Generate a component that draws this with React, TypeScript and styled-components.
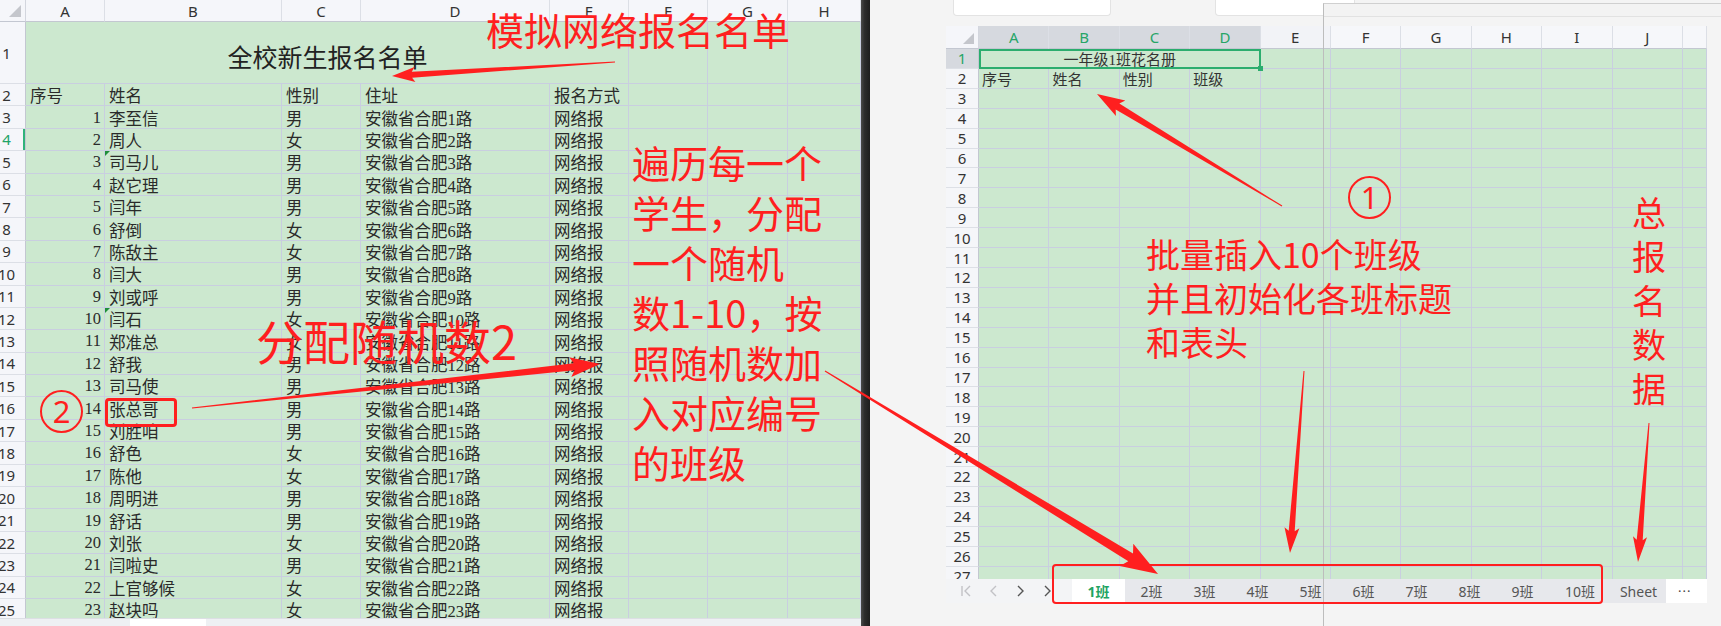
import React from 'react';
import styled, { createGlobalStyle } from 'styled-components';

const GlobalStyle = createGlobalStyle`
  html, body { margin: 0; padding: 0; }
  body {
    width: 1721px; height: 626px; overflow: hidden;
    background: #f4f4f4;
    font-family: "Noto Sans CJK SC", sans-serif;
  }
`;

const RED = '#ff1f1f';
const GRID = '#c9cee0';
const CELL_BG = '#cce8cf';

const Page = styled.div`
  position: relative;
  width: 1721px;
  height: 626px;
  display: flex;
  overflow: hidden;
`;

/* ---------------- left sheet ---------------- */
const LeftPanel = styled.div`
  width: 861px;
  flex: none;
  display: flex;
  flex-direction: column;
  background: ${CELL_BG};
`;

const LeftGrid = styled.div`
  height: 618px;
  overflow: hidden;
  display: grid;
  grid-template-columns: 26px 79px 177px 79px 189px 79px 79px 80px 73px;
  grid-template-rows: 22px 62px repeat(24, 22.4px);
`;

const Corner = styled.div<{ $w: number }>`
  position: relative;
  box-sizing: border-box;
  background: #f5f6fa;
  border-right: 1px solid #d3d6de;
  border-bottom: 1px solid #c3c7d1;
  &::after {
    content: '';
    position: absolute;
    right: 4px;
    bottom: 4px;
    width: 0;
    height: 0;
    border-left: ${p => p.$w}px solid transparent;
    border-bottom: ${p => p.$w}px solid #c4c6cc;
  }
`;

const ColHead = styled.div<{ $hl?: boolean; $light?: boolean }>`
  box-sizing: border-box;
  display: flex;
  align-items: center;
  justify-content: center;
  background: ${p => (p.$hl ? '#d6d9df' : p.$light ? '#f6f7fa' : '#f2f3f7')};
  color: ${p => (p.$hl ? '#27a567' : '#333')};
  border-right: 1px solid #dcdfe6;
  border-bottom: 1px solid #c3c7d1;
  font-family: "Noto Sans", sans-serif;
  font-size: 15px;
`;

const LeftColHead = styled(ColHead)`
  background: #f5f6fa;
`;

const LeftRowHead = styled.div<{ $active?: boolean }>`
  box-sizing: border-box;
  display: flex;
  align-items: center;
  justify-content: center;
  padding-right: 12px;
  background: #f5f6fa;
  color: ${p => (p.$active ? '#21a366' : '#333')};
  box-shadow: ${p => (p.$active ? 'inset -2px 0 0 #2fb37a' : 'none')};
  border-right: 1px solid #c3c7d1;
  border-bottom: 1px solid #dcdfe6;
  font-family: "Noto Sans", sans-serif;
  font-size: 15px;
  overflow: visible;
`;

const Cell = styled.div<{ $right?: boolean; $flag?: boolean }>`
  position: relative;
  box-sizing: border-box;
  display: flex;
  align-items: center;
  justify-content: ${p => (p.$right ? 'flex-end' : 'flex-start')};
  padding: 1px 3px 0 4px;
  border-right: 1px solid ${GRID};
  border-bottom: 1px solid ${GRID};
  font-family: "Liberation Serif", "Noto Sans CJK SC", serif;
  font-size: 16.5px;
  color: #2a2a2a;
  white-space: nowrap;
  overflow: hidden;
  &::before {
    content: '';
    display: ${p => (p.$flag ? 'block' : 'none')};
    position: absolute;
    left: 0;
    top: 0;
    border-top: 5px solid #1f8f3a;
    border-right: 5px solid transparent;
  }
`;

const TitleCell = styled(Cell)`
  grid-column: span 5;
  justify-content: center;
  padding-top: 7px;
  font-size: 25px;
  font-family: "Noto Sans CJK SC", serif;
  color: #222;
`;

const LeftTabs = styled.div`
  height: 8px;
  display: flex;
  padding-left: 130px;
  background: #eef0f3;
  border-top: 1px solid #dcdfe4;
  box-sizing: border-box;
`;

const LeftTab = styled.div`
  width: 76px;
  background: #fff;
`;

/* ---------------- divider ---------------- */
const Divider = styled.div`
  width: 9px;
  flex: none;
  background: linear-gradient(to right, #4a4a4a, #2c2c2c 40%, #1e1e1e);
`;

/* ---------------- right sheet ---------------- */
const RightPanel = styled.div`
  flex: 1;
  display: flex;
  flex-direction: column;
  background: #f4f4f4;
`;

const TopStrip = styled.div`
  height: 26px;
  display: flex;
  align-items: flex-start;
  gap: 104px;
  padding-left: 83px;
`;

const InputBox = styled.div<{ $w: number }>`
  width: ${p => p.$w}px;
  height: 16px;
  box-sizing: border-box;
  background: #fff;
  border: 1px solid #e3e3e3;
  border-top: none;
  border-radius: 0 0 4px 4px;
`;

const SheetWrap = styled.div`
  margin-left: 76px;
  width: 761px;
  display: flex;
  flex-direction: column;
`;

const RGrid = styled.div`
  height: 553px;
  overflow: hidden;
  display: grid;
  grid-template-columns: 33px repeat(10, 70.4px) 24px;
  grid-template-rows: 23px repeat(27, 19.92px);
  background: ${CELL_BG};
`;

const RRowHead = styled.div<{ $active?: boolean }>`
  box-sizing: border-box;
  display: flex;
  align-items: center;
  justify-content: center;
  background: ${p => (p.$active ? '#d6d9df' : '#f5f6f9')};
  color: ${p => (p.$active ? '#27a567' : '#333')};
  border-right: 1px solid #c3c7d1;
  border-bottom: 1px solid #dde0e6;
  font-family: "Noto Sans", sans-serif;
  font-size: 15px;
`;

const RCell = styled.div`
  box-sizing: border-box;
  display: flex;
  align-items: center;
  padding: 0 3px;
  border-right: 1px solid ${GRID};
  border-bottom: 1px solid ${GRID};
  font-family: "Noto Sans CJK SC", sans-serif;
  font-size: 15px;
  color: #333;
  white-space: nowrap;
  overflow: hidden;
`;

const MergedTitle = styled.div`
  position: relative;
  grid-column: span 4;
  display: flex;
  align-items: center;
  justify-content: center;
  box-shadow: inset 0 0 0 2px #2bad6e;
  font-family: "Liberation Serif", "Noto Sans CJK SC", serif;
  font-size: 15px;
  color: #333;
  &::after {
    content: '';
    position: absolute;
    right: -2px;
    bottom: -2px;
    width: 5px;
    height: 5px;
    background: #2bad6e;
  }
`;

const TabBar = styled.div`
  height: 24px;
  display: flex;
  background: #e7e8ec;
`;

const NavArea = styled.div`
  width: 126px;
  display: flex;
  align-items: center;
  gap: 15px;
  padding-left: 14px;
  box-sizing: border-box;
  background: #f3f4f6;
`;

const NavIcon = styled.svg<{ $dim?: boolean }>`
  width: 12px;
  height: 14px;
  stroke: ${p => (p.$dim ? '#c2c2c6' : '#555')};
  fill: none;
  stroke-width: 1.4;
`;

const Tab = styled.div<{ $active?: boolean; $w: number }>`
  width: ${p => p.$w}px;
  flex: none;
  display: flex;
  align-items: center;
  justify-content: center;
  background: ${p => (p.$active ? '#fff' : '#e7e8ec')};
  color: ${p => (p.$active ? '#1fa463' : '#555')};
  font-weight: ${p => (p.$active ? 700 : 400)};
  font-family: "Noto Sans", "Noto Sans CJK SC", sans-serif;
  font-size: 14px;
`;

const MoreArea = styled.div`
  flex: 1;
  display: flex;
  align-items: center;
  padding-left: 12px;
  background: #fff;
  color: #444;
  font-size: 13px;
  letter-spacing: 1px;
  font-family: "Noto Sans", sans-serif;
`;

/* ---------------- overlays ---------------- */
const WindowEdge = styled.div`
  position: absolute;
  left: 1323px;
  top: 3px;
  right: 0;
  bottom: 0;
  border-left: 1px solid #bdbdbd;
  border-top: 1px solid #d0d0d0;
  pointer-events: none;
`;

const WindowTop = styled.div`
  height: 12px;
  background: #f3f3f3;
  border-bottom: 1px solid #e2e2e2;
`;

const Note = styled.div`
  position: absolute;
  color: ${RED};
  font-family: "Noto Sans CJK SC", sans-serif;
  white-space: nowrap;
  pointer-events: none;
`;

const TitleNote = styled(Note)`
  left: 486px;
  top: 10px;
  font-size: 38px;
  line-height: 38px;
`;

const StepNote = styled(Note)`
  left: 632px;
  top: 137px;
  font-size: 38px;
  line-height: 50px;
`;

const RandomNote = styled(Note)`
  left: 256px;
  top: 316px;
  font-size: 47px;
  line-height: 47px;
`;

const ClassNote = styled(Note)`
  left: 1146px;
  top: 232px;
  font-size: 34px;
  line-height: 44px;
`;

const SheetNote = styled(Note)`
  left: 1632px;
  top: 190px;
  font-size: 34px;
  line-height: 44px;
  display: flex;
  flex-direction: column;
`;

const Circled = styled.div<{ $x: number; $y: number }>`
  position: absolute;
  left: ${p => p.$x}px;
  top: ${p => p.$y}px;
  width: 43px;
  height: 43px;
  box-sizing: border-box;
  border: 2px solid ${RED};
  border-radius: 50%;
  display: flex;
  align-items: center;
  justify-content: center;
  color: ${RED};
  font-family: "Noto Sans", sans-serif;
  font-size: 31px;
  line-height: 1;
  padding-bottom: 1px;
`;

const RedBox = styled.div<{ $x: number; $y: number; $w: number; $h: number; $b: number }>`
  position: absolute;
  left: ${p => p.$x}px;
  top: ${p => p.$y}px;
  width: ${p => p.$w}px;
  height: ${p => p.$h}px;
  box-sizing: border-box;
  border: ${p => p.$b}px solid ${RED};
  border-radius: 4px;
  pointer-events: none;
`;

const ArrowLayer = styled.svg`
  position: absolute;
  left: 0;
  top: 0;
  width: 1721px;
  height: 626px;
  pointer-events: none;
`;

/* ---------------- data ---------------- */
const students: [string, string][] = [
  ['李至信', '男'], ['周人', '女'], ['司马儿', '男'], ['赵它理', '男'], ['闫年', '男'],
  ['舒倒', '女'], ['陈敌主', '女'], ['闫大', '男'], ['刘或呼', '男'], ['闫石', '女'],
  ['郑准总', '女'], ['舒我', '男'], ['司马使', '男'], ['张总哥', '男'], ['刘胜咱', '男'],
  ['舒色', '女'], ['陈他', '女'], ['周明进', '男'], ['舒话', '男'], ['刘张', '女'],
  ['闫啦史', '男'], ['上官够候', '女'], ['赵块吗', '女'],
];

const leftCols = ['A', 'B', 'C', 'D', 'E', 'F', 'G', 'H'];
const rightCols = ['A', 'B', 'C', 'D', 'E', 'F', 'G', 'H', 'I', 'J', ''];

type ArrowSpec = [number, number, number, number, number, number, number, number];

const arrows: ArrowSpec[] = [
  [615, 62, 392, 76, 1, 6, 20, 15],
  [192, 408, 600, 364, 1, 7, 26, 20],
  [825, 371, 1158, 574, 1.2, 9, 32, 26],
  [1282, 206, 1097, 94, 1, 7, 24, 18],
  [1304, 371, 1290, 553, 1, 6, 22, 15],
  [1649, 423, 1638, 562, 1, 6, 22, 14],
];

function arrowPoints([x1, y1, x2, y2, w1, w2, hl, hw]: ArrowSpec): string {
  const dx = x2 - x1;
  const dy = y2 - y1;
  const L = Math.hypot(dx, dy);
  const ux = dx / L;
  const uy = dy / L;
  const nx = -uy;
  const ny = ux;
  const bx = x2 - ux * hl;
  const by = y2 - uy * hl;
  const back = hl * 0.15;
  const cx = bx - ux * back;
  const cy = by - uy * back;
  const pts = [
    [x1 + (nx * w1) / 2, y1 + (ny * w1) / 2],
    [bx + (nx * w2) / 2, by + (ny * w2) / 2],
    [cx + (nx * hw) / 2, cy + (ny * hw) / 2],
    [x2, y2],
    [cx - (nx * hw) / 2, cy - (ny * hw) / 2],
    [bx - (nx * w2) / 2, by - (ny * w2) / 2],
    [x1 - (nx * w1) / 2, y1 - (ny * w1) / 2],
  ];
  return pts.map(p => `${p[0].toFixed(1)},${p[1].toFixed(1)}`).join(' ');
}

const tabs: { label: string; w: number; active?: boolean }[] = [
  { label: '1班', w: 53, active: true },
  { label: '2班', w: 53 }, { label: '3班', w: 53 }, { label: '4班', w: 53 },
  { label: '5班', w: 53 }, { label: '6班', w: 53 }, { label: '7班', w: 53 },
  { label: '8班', w: 53 }, { label: '9班', w: 53 }, { label: '10班', w: 62 },
  { label: 'Sheet', w: 55 },
];

function LeftSheet() {
  return (
    <LeftPanel>
      <LeftGrid>
        <Corner $w={12} />
        {leftCols.map(c => (
          <LeftColHead key={c}>{c}</LeftColHead>
        ))}
        <LeftRowHead>1</LeftRowHead>
        <TitleCell>全校新生报名名单</TitleCell>
        <Cell />
        <Cell />
        <Cell />
        <LeftRowHead>2</LeftRowHead>
        <Cell>序号</Cell>
        <Cell>姓名</Cell>
        <Cell>性别</Cell>
        <Cell>住址</Cell>
        <Cell>报名方式</Cell>
        <Cell />
        <Cell />
        <Cell />
        {students.map(([name, sex], i) => (
          <React.Fragment key={name}>
            <LeftRowHead $active={i + 3 === 4}>{i + 3}</LeftRowHead>
            <Cell $right>{i + 1}</Cell>
            <Cell $flag={i === 2 || i === 9}>{name}</Cell>
            <Cell>{sex}</Cell>
            <Cell>{`安徽省合肥${i + 1}路`}</Cell>
            <Cell>网络报</Cell>
            <Cell />
            <Cell />
            <Cell />
          </React.Fragment>
        ))}
      </LeftGrid>
      <LeftTabs>
        <LeftTab />
      </LeftTabs>
    </LeftPanel>
  );
}

function RightSheet() {
  const rows = Array.from({ length: 25 }, (_, i) => i + 3);
  return (
    <RightPanel>
      <TopStrip>
        <InputBox $w={158} />
        <InputBox $w={140} />
      </TopStrip>
      <SheetWrap>
        <RGrid>
          <Corner $w={11} />
          {rightCols.map((c, i) => (
            <ColHead key={i} $hl={i < 4} $light={i > 4}>
              {c}
            </ColHead>
          ))}
          <RRowHead $active>1</RRowHead>
          <MergedTitle>一年级1班花名册</MergedTitle>
          {Array.from({ length: 7 }, (_, i) => (
            <RCell key={i} />
          ))}
          <RRowHead>2</RRowHead>
          <RCell>序号</RCell>
          <RCell>姓名</RCell>
          <RCell>性别</RCell>
          <RCell>班级</RCell>
          {Array.from({ length: 7 }, (_, i) => (
            <RCell key={i} />
          ))}
          {rows.map(r => (
            <React.Fragment key={r}>
              <RRowHead>{r}</RRowHead>
              {Array.from({ length: 11 }, (_, i) => (
                <RCell key={i} />
              ))}
            </React.Fragment>
          ))}
        </RGrid>
        <TabBar>
          <NavArea>
            <NavIcon $dim viewBox="0 0 12 14">
              <path d="M2 2v10M10 2L5 7l5 5" />
            </NavIcon>
            <NavIcon $dim viewBox="0 0 12 14">
              <path d="M9 2L4 7l5 5" />
            </NavIcon>
            <NavIcon viewBox="0 0 12 14">
              <path d="M4 2l5 5-5 5" />
            </NavIcon>
            <NavIcon viewBox="0 0 12 14">
              <path d="M4 2l5 5-5 5" />
            </NavIcon>
          </NavArea>
          {tabs.map(t => (
            <Tab key={t.label} $w={t.w} $active={t.active}>
              {t.label}
            </Tab>
          ))}
          <MoreArea>···</MoreArea>
        </TabBar>
      </SheetWrap>
    </RightPanel>
  );
}

export default function App() {
  return (
    <>
      <GlobalStyle />
      <Page>
        <LeftSheet />
        <Divider />
        <RightSheet />

        <WindowEdge>
          <WindowTop />
        </WindowEdge>

        <TitleNote>模拟网络报名名单</TitleNote>
        <StepNote>
          遍历每一个
          <br />
          学生，分配
          <br />
          一个随机
          <br />
          数1-10，按
          <br />
          照随机数加
          <br />
          入对应编号
          <br />
          的班级
        </StepNote>
        <RandomNote>分配随机数2</RandomNote>
        <ClassNote>
          批量插入10个班级
          <br />
          并且初始化各班标题
          <br />
          和表头
        </ClassNote>
        <SheetNote>
          <span>总</span>
          <span>报</span>
          <span>名</span>
          <span>数</span>
          <span>据</span>
        </SheetNote>

        <Circled $x={40} $y={390}>2</Circled>
        <Circled $x={1348} $y={176}>1</Circled>

        <RedBox $x={105} $y={398} $w={72} $h={29} $b={3} />
        <RedBox $x={1052} $y={564} $w={551} $h={40} $b={2.5} />

        <ArrowLayer viewBox="0 0 1721 626">
          {arrows.map((a, i) => (
            <polygon key={i} points={arrowPoints(a)} fill={RED} />
          ))}
        </ArrowLayer>
      </Page>
    </>
  );
}
